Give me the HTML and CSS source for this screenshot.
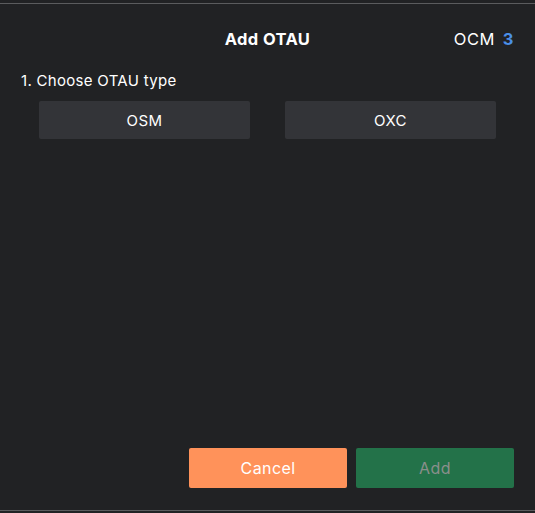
FILE: index.html
```html
<!DOCTYPE html>
<html>
<head>
<meta charset="utf-8">
<link rel="stylesheet" href="styles.css">
</head>
<body>
<div class="dialog">
  <div class="header">
    <div class="title">Add OTAU</div>
    <div class="ocm">OCM <span class="count">3</span></div>
  </div>
  <div class="content">
    <div class="step">1. Choose OTAU type</div>
    <div class="options">
      <div class="option">OSM</div>
      <div class="option">OXC</div>
    </div>
  </div>
  <div class="footer">
    <div class="btn cancel">Cancel</div>
    <div class="btn add">Add</div>
  </div>
</div>
</body>
</html>
```

FILE: styles.css
```css
html, body {
  margin: 0;
  padding: 0;
  background: #212224;
  font-family: Inter, "Open Sans", sans-serif;
  color: #ffffff;
}
body {
  padding-top: 3px;
}
.dialog {
  box-sizing: border-box;
  height: 508px;
  border-top: 1px solid #5b5c5e;
  border-bottom: 1px solid #5b5c5e;
  display: flex;
  flex-direction: column;
}
.header {
  position: relative;
  height: 70px;
  display: flex;
  align-items: center;
  justify-content: center;
}
.title {
  font-size: 16.5px;
  font-weight: 700;
  letter-spacing: 0.4px;
}
.ocm {
  position: absolute;
  right: 21px;
  top: 0;
  height: 70px;
  display: flex;
  align-items: center;
  font-size: 16.5px;
  gap: 8px;
  letter-spacing: 0.5px;
}
.count {
  color: #4a8fe7;
  font-weight: 700;
}
.content {
  flex: 1;
}
.step {
  padding-left: 21px;
  font-size: 15px;
  line-height: 14px;
  letter-spacing: 0.3px;
}
.options {
  display: grid;
  grid-template-columns: 211px 211px;
  gap: 35px;
  padding: 13px 39px 0;
}
.option {
  height: 38px;
  background: #333438;
  border-radius: 2px;
  display: flex;
  align-items: center;
  justify-content: center;
  font-size: 15px;
  letter-spacing: 0.4px;
}
.footer {
  display: flex;
  justify-content: flex-end;
  gap: 9px;
  padding: 0 21px 22px;
}
.btn {
  width: 158px;
  height: 40px;
  border-radius: 2px;
  display: flex;
  align-items: center;
  justify-content: center;
  font-size: 16px;
  letter-spacing: 0.4px;
}
.cancel {
  background: #ff925a;
  color: #ffffff;
}
.add {
  background: #237249;
  color: #8a8f8c;
}
```
